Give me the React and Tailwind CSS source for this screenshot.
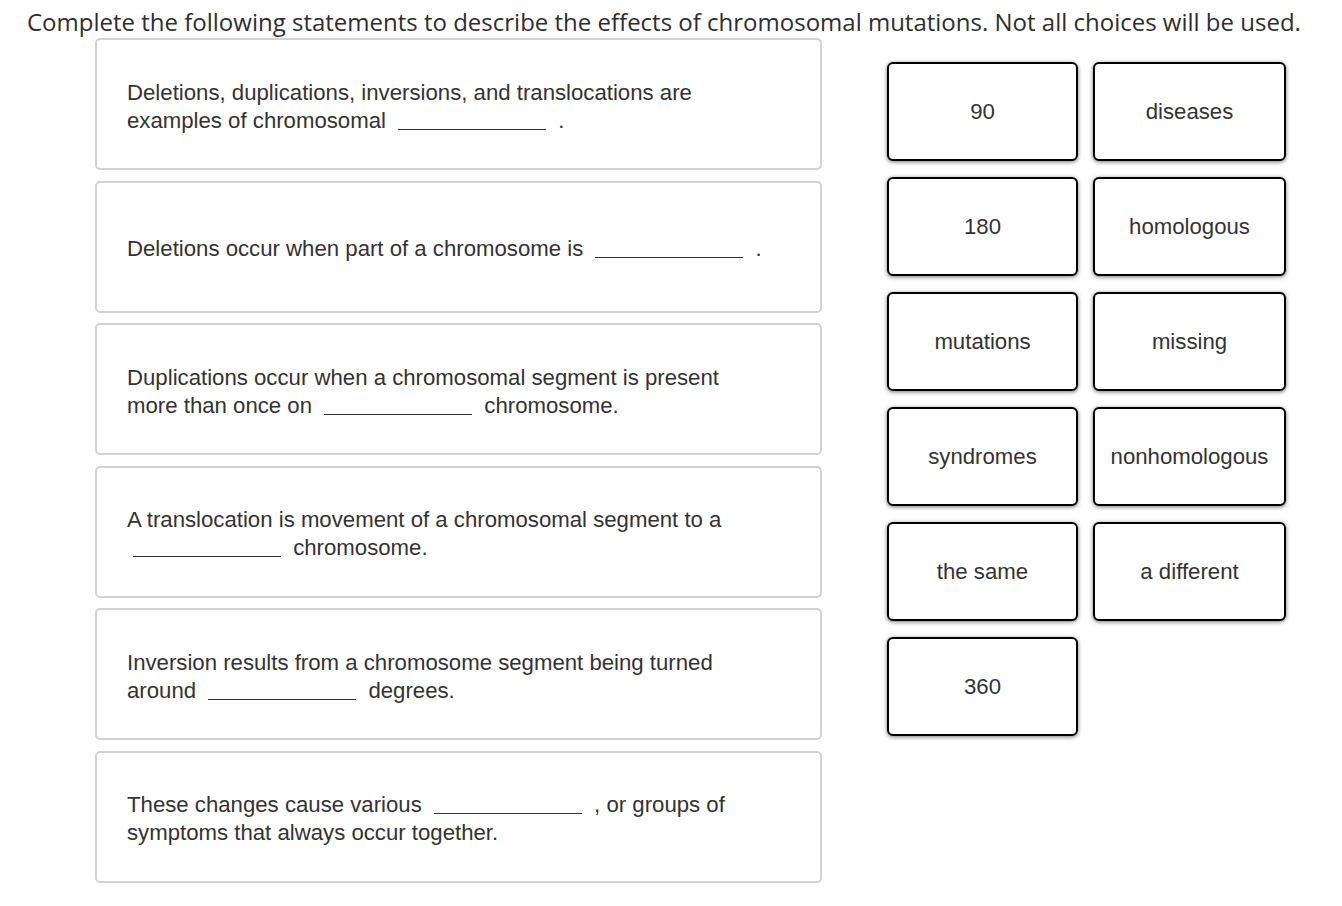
import React from "react";

const body = { fontFamily: '"Liberation Sans", Arial, sans-serif' };

function Blank() {
  return (
    <span className="inline-block w-[148px] mx-[6px] border-b border-[#333] align-[-2px] h-[18px]" />
  );
}

const statements = [
  [
    "Deletions, duplications, inversions, and translocations are examples of chromosomal ",
    " .",
  ],
  ["Deletions occur when part of a chromosome is ", " ."],
  [
    "Duplications occur when a chromosomal segment is present more than once on ",
    " chromosome.",
  ],
  ["A translocation is movement of a chromosomal segment to a ", " chromosome."],
  ["Inversion results from a chromosome segment being turned around ", " degrees."],
  ["These changes cause various ", " , or groups of symptoms that always occur together."],
];

const choices = [
  "90",
  "diseases",
  "180",
  "homologous",
  "mutations",
  "missing",
  "syndromes",
  "nonhomologous",
  "the same",
  "a different",
  "360",
];

export default function App() {
  return (
    <div className="w-[1342px] h-[906px] bg-white text-[#333]">
      <h1
        className="pl-[27px] pt-[6px] text-[24px] leading-[32px] font-normal text-[#2e2e2e] whitespace-nowrap"
        style={{ fontFamily: '"Open Sans", Lato, sans-serif' }}
      >
        Complete the following statements to describe the effects of chromosomal mutations. Not all choices will be used.
      </h1>
      <div className="flex">
        <div className="ml-[95px] w-[727px] flex flex-col gap-[10.5px]">
          {statements.map(([a, b], i) => (
            <div
              key={i}
              className="h-[132px] shrink-0 border-2 border-[#d2d2d2] rounded-[5px] flex items-center pl-[30px] pt-[5px]"
            >
              <p className="text-[22.2px] leading-[28px] w-[640px]" style={body}>
                {a}
                <Blank />
                {b}
              </p>
            </div>
          ))}
        </div>
        <div className="ml-[65px] mt-[24px] grid grid-cols-[191px_193px] gap-x-[15px] gap-y-[16px] content-start">
          {choices.map((c) => (
            <div
              key={c}
              className="h-[99px] border-2 border-black rounded-[6px] bg-white flex items-center justify-center text-[22.2px] shadow-[0_1px_4px_rgba(0,0,0,0.55)]"
              style={body}
            >
              {c}
            </div>
          ))}
        </div>
      </div>
    </div>
  );
}
